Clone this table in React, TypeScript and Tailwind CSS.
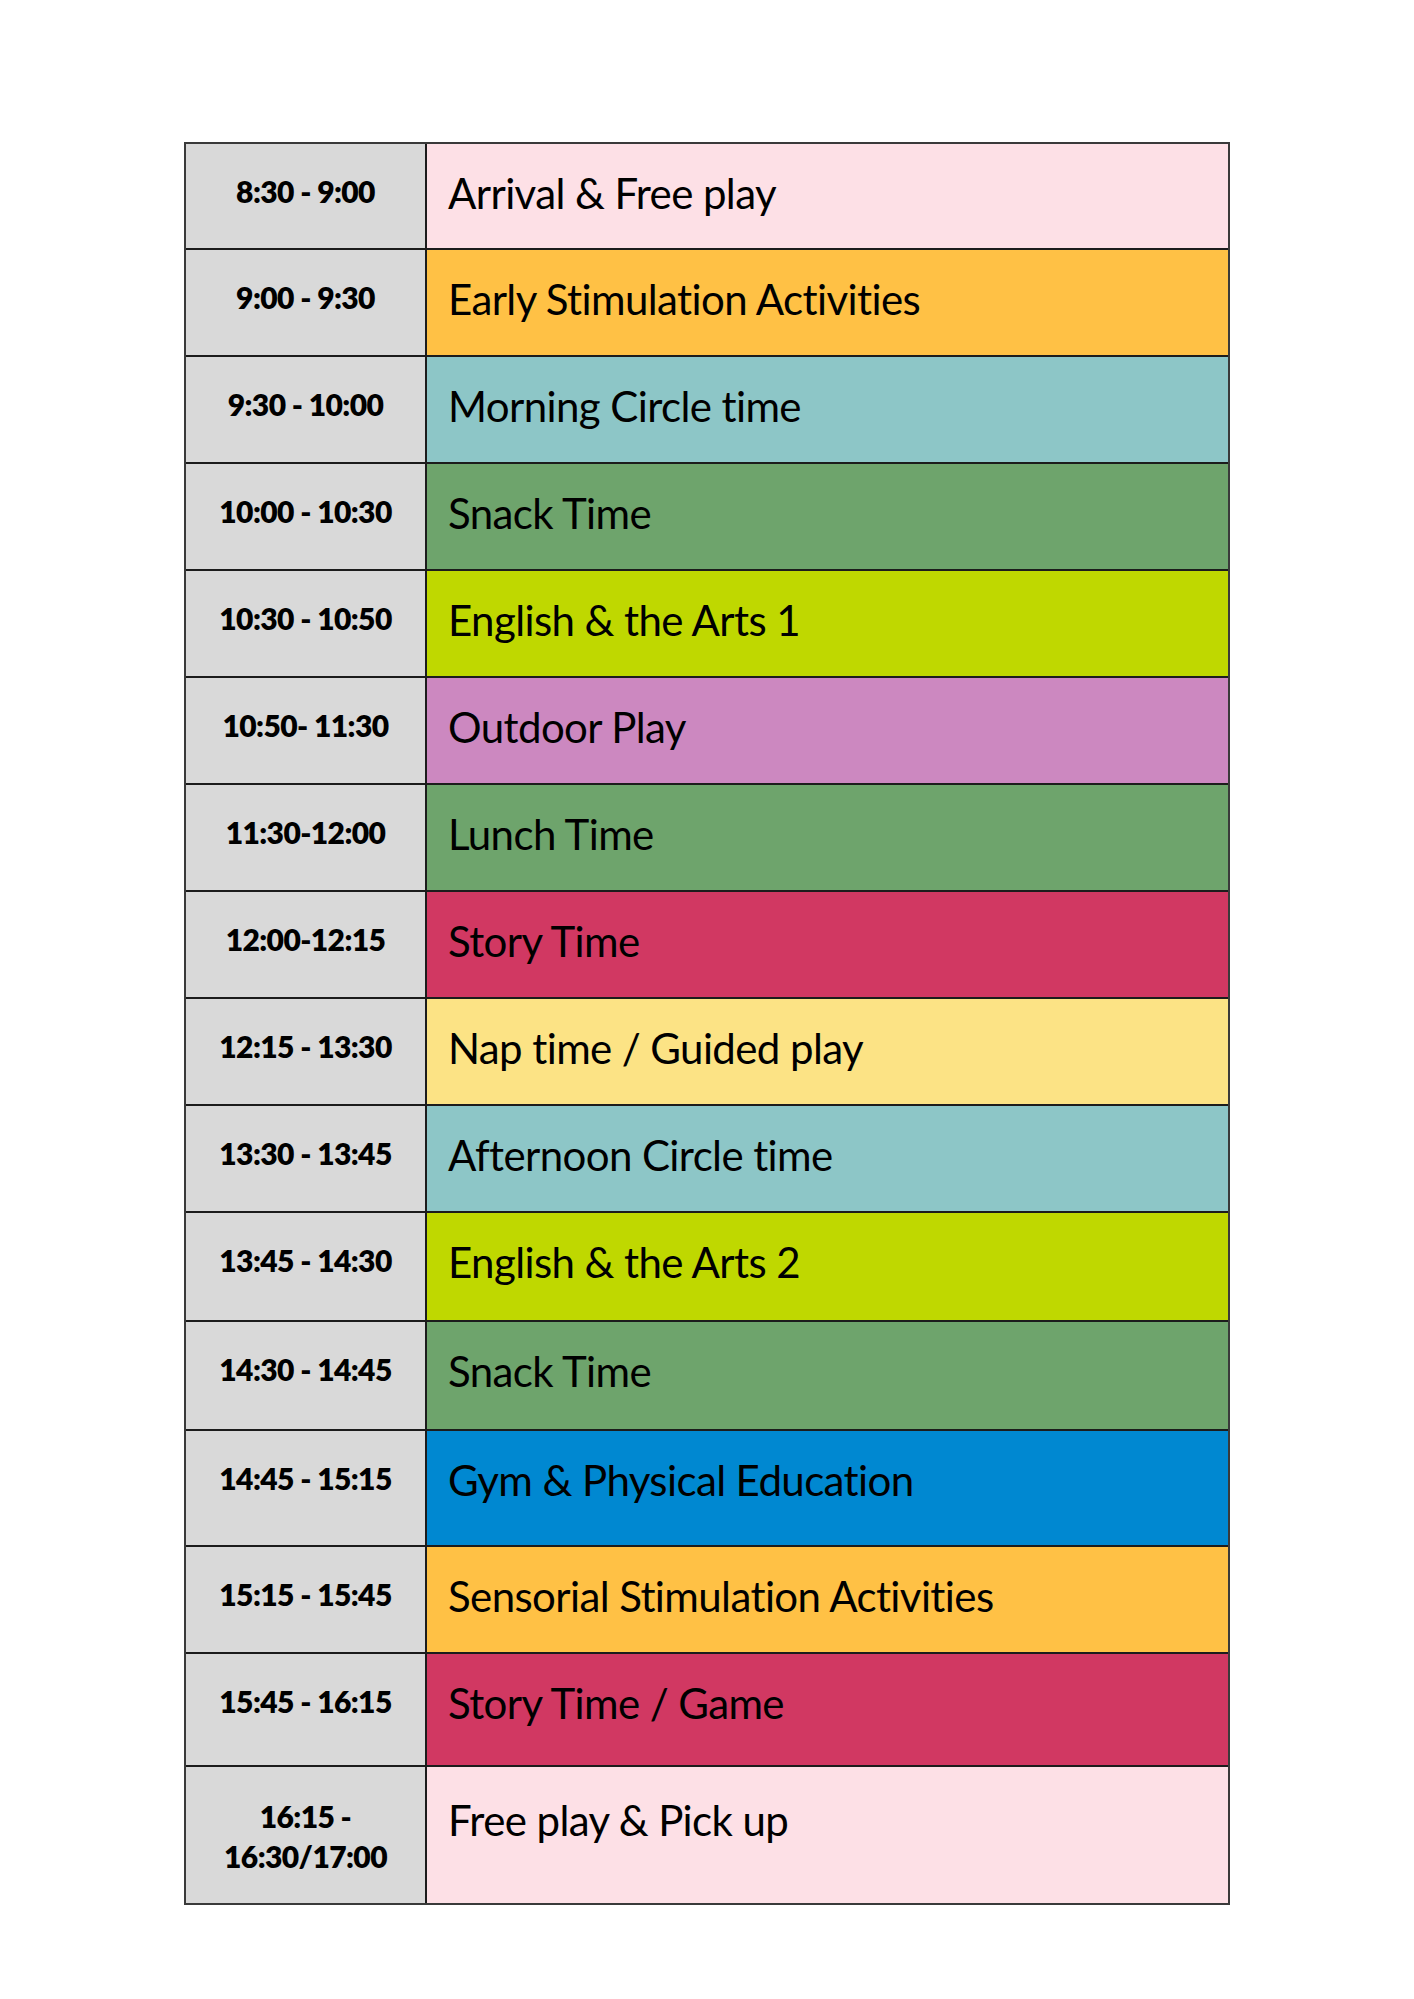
const rows = [
  { time: "8:30 - 9:00", label: "Arrival & Free play", bg: "bg-[#fde0e6]", h: "h-[106px]" },
  { time: "9:00 - 9:30", label: "Early Stimulation Activities", bg: "bg-[#ffc145]", h: "h-[107px]" },
  { time: "9:30 - 10:00", label: "Morning Circle time", bg: "bg-[#8dc6c7]", h: "h-[107px]" },
  { time: "10:00 - 10:30", label: "Snack Time", bg: "bg-[#6ea46c]", h: "h-[107px]" },
  { time: "10:30 - 10:50", label: "English & the Arts 1", bg: "bg-[#bfd800]", h: "h-[107px]" },
  { time: "10:50- 11:30", label: "Outdoor Play", bg: "bg-[#cc88c0]", h: "h-[107px]" },
  { time: "11:30-12:00", label: "Lunch Time", bg: "bg-[#6ea46c]", h: "h-[107px]" },
  { time: "12:00-12:15", label: "Story Time", bg: "bg-[#d13862]", h: "h-[107px]" },
  { time: "12:15 - 13:30", label: "Nap time / Guided play", bg: "bg-[#fce385]", h: "h-[107px]" },
  { time: "13:30 - 13:45", label: "Afternoon Circle time", bg: "bg-[#8dc6c7]", h: "h-[107px]" },
  { time: "13:45 - 14:30", label: "English & the Arts 2", bg: "bg-[#bfd800]", h: "h-[109px]" },
  { time: "14:30 - 14:45", label: "Snack Time", bg: "bg-[#6ea46c]", h: "h-[109px]" },
  { time: "14:45 - 15:15", label: "Gym & Physical Education", bg: "bg-[#0088d1]", h: "h-[116px]" },
  { time: "15:15 - 15:45", label: "Sensorial Stimulation Activities", bg: "bg-[#ffc145]", h: "h-[107px]" },
  { time: "15:45 - 16:15", label: "Story Time / Game", bg: "bg-[#d13862]", h: "h-[113px]" },
];

export default function App() {
  return (
    <main className="min-h-[1999px] bg-white pt-[142px] font-['Lato',sans-serif] text-black">
      <div className="ml-[184px] w-[1046px] border-2 border-[#3a3a3a]">
        {rows.map((row, i) => (
          <div
            key={i}
            className={`flex border-b-2 border-[#1c1c1c] ${row.h}`}
          >
            <div className="w-[241px] shrink-0 border-r-2 border-[#1c1c1c] bg-[#d9d9d9] pt-[32px] text-center text-[30px] font-extrabold leading-[30px] tracking-[-0.6px]">
              {row.time}
            </div>
            <div className={`flex-1 pl-[21px] pt-[28px] text-[42px] leading-[42px] tracking-[-0.6px] ${row.bg}`}>
              {row.label}
            </div>
          </div>
        ))}

        {/* last row, two-line time */}
        <div className="flex h-[136px]">
          <div className="w-[241px] shrink-0 border-r-2 border-[#1c1c1c] bg-[#d9d9d9] pt-[29px] text-center text-[30px] font-extrabold leading-[40px] tracking-[-0.6px]">
            16:15 -
            <br />
            16:30/17:00
          </div>
          <div className="flex-1 bg-[#fde0e6] pl-[21px] pt-[32px] text-[42px] leading-[42px] tracking-[-0.6px]">
            Free play &amp; Pick up
          </div>
        </div>
      </div>
    </main>
  );
}
